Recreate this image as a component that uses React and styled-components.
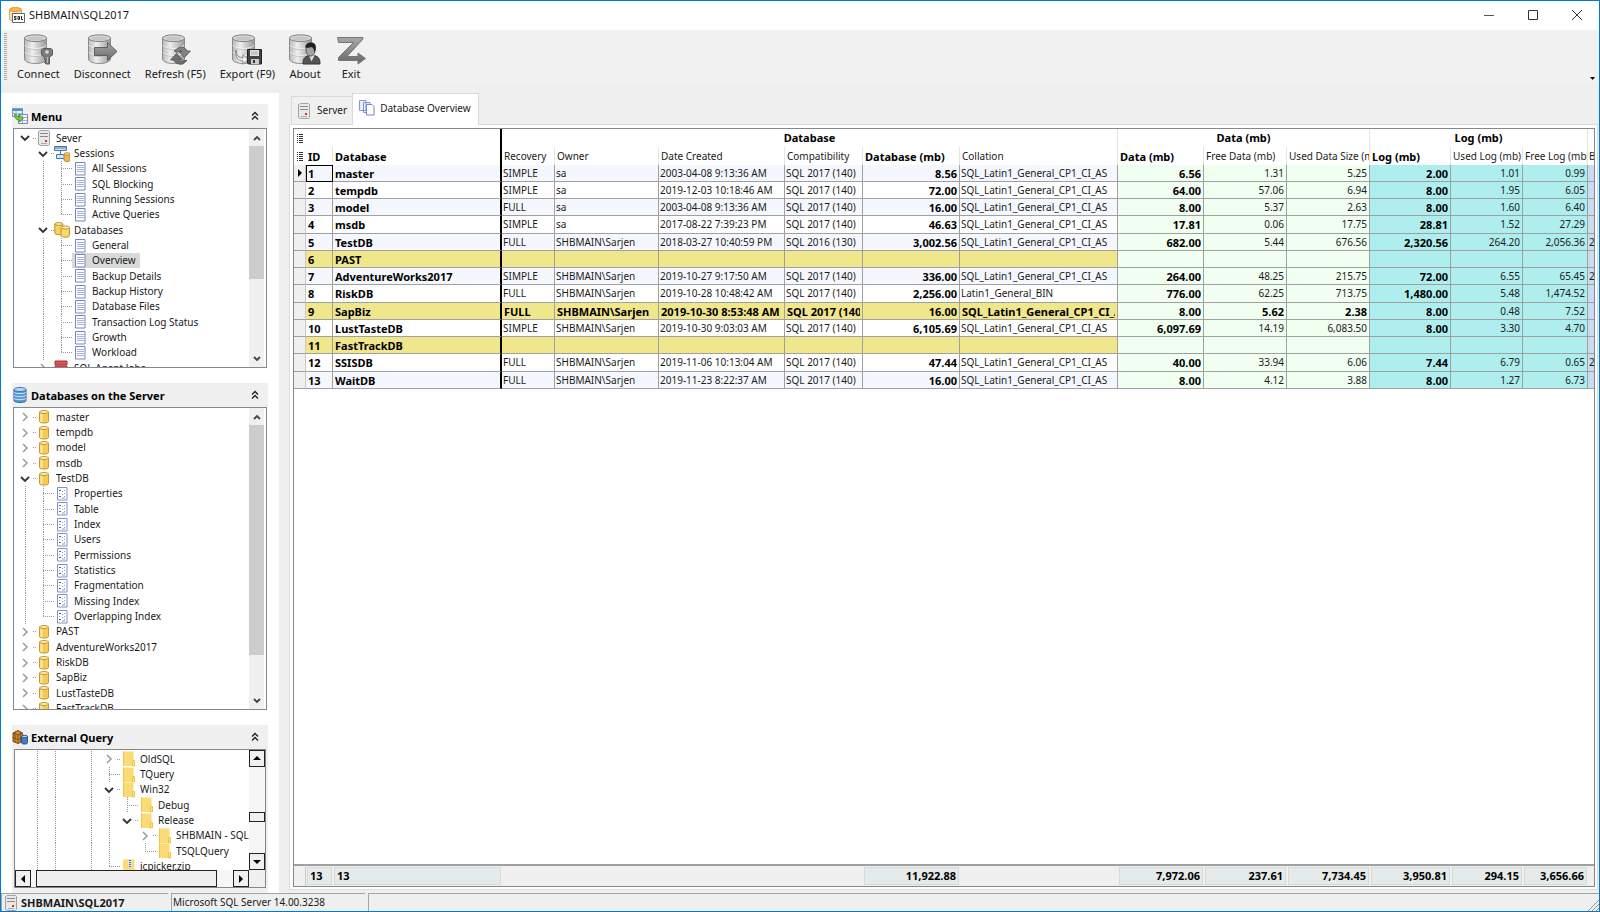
import React from 'react';
import styled, { createGlobalStyle, css } from 'styled-components';

const menuTree = [
  { guides: '', state: 'open', icon: 'server', label: 'Sever' },
  { guides: '0', state: 'open', icon: 'sessions', label: 'Sessions' },
  { guides: '01', state: 'leaf', icon: 'page', label: 'All Sessions' },
  { guides: '01', state: 'leaf', icon: 'page', label: 'SQL Blocking' },
  { guides: '01', state: 'leaf', icon: 'page', label: 'Running Sessions' },
  { guides: '01', state: 'last', icon: 'page', label: 'Active Queries' },
  { guides: '0', state: 'open', icon: 'databases', label: 'Databases' },
  { guides: '01', state: 'leaf', icon: 'page', label: 'General' },
  { guides: '01', state: 'leaf', icon: 'page', label: 'Overview', selected: true },
  { guides: '01', state: 'leaf', icon: 'page', label: 'Backup Details' },
  { guides: '01', state: 'leaf', icon: 'page', label: 'Backup History' },
  { guides: '01', state: 'leaf', icon: 'page', label: 'Database Files' },
  { guides: '01', state: 'leaf', icon: 'page', label: 'Transaction Log Status' },
  { guides: '01', state: 'leaf', icon: 'page', label: 'Growth' },
  { guides: '01', state: 'last', icon: 'page', label: 'Workload' },
  { guides: '0', state: 'closed', icon: 'job', label: 'SQL Agent Jobs' },
];

const databaseTree = [
  { guides: '', state: 'closed', icon: 'db', label: 'master' },
  { guides: '', state: 'closed', icon: 'db', label: 'tempdb' },
  { guides: '', state: 'closed', icon: 'db', label: 'model' },
  { guides: '', state: 'closed', icon: 'db', label: 'msdb' },
  { guides: '', state: 'open', icon: 'db', label: 'TestDB' },
  { guides: '1', state: 'leaf', icon: 'sheet', label: 'Properties' },
  { guides: '1', state: 'leaf', icon: 'sheet', label: 'Table' },
  { guides: '1', state: 'leaf', icon: 'sheet', label: 'Index' },
  { guides: '1', state: 'leaf', icon: 'sheet', label: 'Users' },
  { guides: '1', state: 'leaf', icon: 'sheet', label: 'Permissions' },
  { guides: '1', state: 'leaf', icon: 'sheet', label: 'Statistics' },
  { guides: '1', state: 'leaf', icon: 'sheet', label: 'Fragmentation' },
  { guides: '1', state: 'leaf', icon: 'sheet', label: 'Missing Index' },
  { guides: '1', state: 'last', icon: 'sheet', label: 'Overlapping Index' },
  { guides: '', state: 'closed', icon: 'db', label: 'PAST' },
  { guides: '', state: 'closed', icon: 'db', label: 'AdventureWorks2017' },
  { guides: '', state: 'closed', icon: 'db', label: 'RiskDB' },
  { guides: '', state: 'closed', icon: 'db', label: 'SapBiz' },
  { guides: '', state: 'closed', icon: 'db', label: 'LustTasteDB' },
  { guides: '', state: 'closed', icon: 'db', label: 'FastTrackDB' },
];

const queryTree = [
  { guides: '1101', state: 'closed', icon: 'folder', label: 'OldSQL' },
  { guides: '1101', state: 'leaf', icon: 'folder', label: 'TQuery' },
  { guides: '1101', state: 'open', icon: 'folder', label: 'Win32' },
  { guides: '11011', state: 'leaf', icon: 'folder', label: 'Debug' },
  { guides: '11011', state: 'open', icon: 'folder', label: 'Release' },
  { guides: '110110', state: 'closed', icon: 'folder', label: 'SHBMAIN - SQL2017' },
  { guides: '110110', state: 'last', icon: 'folder', label: 'TSQLQuery' },
  { guides: '1101', state: 'last', icon: 'zip', label: 'jcpicker.zip' },
];

const columns = [
  { title: 'ID', width: 27, bold: true },
  { title: 'Database', width: 169, bold: true, fixed: true },
  { title: 'Recovery', width: 53 },
  { title: 'Owner', width: 104 },
  { title: 'Date Created', width: 126 },
  { title: 'Compatibility', width: 78 },
  { title: 'Database (mb)', width: 97, bold: true, right: true },
  { title: 'Collation', width: 158 },
  { title: 'Data (mb)', width: 86, bold: true, right: true, tone: '#f0fff0' },
  { title: 'Free Data (mb)', width: 83, right: true, tone: '#f0fff0' },
  { title: 'Used Data Size (mb)', width: 83, right: true, tone: '#f0fff0' },
  { title: 'Log (mb)', width: 81, bold: true, right: true, tone: '#afeeee' },
  { title: 'Used Log (mb)', width: 72, right: true, tone: '#afeeee' },
  { title: 'Free Log (mb)', width: 65, right: true, tone: '#afeeee' },
  { title: 'B', tone: '#ccdcf0' },
];

const latin = 'SQL_Latin1_General_CP1_CI_AS';
const sarjen = 'SHBMAIN\\Sarjen';
const rows = [
  ['1', 'master', 'SIMPLE', 'sa', '2003-04-08 9:13:36 AM', 'SQL 2017 (140)', '8.56', latin, '6.56', '1.31', '5.25', '2.00', '1.01', '0.99', ''],
  ['2', 'tempdb', 'SIMPLE', 'sa', '2019-12-03 10:18:46 AM', 'SQL 2017 (140)', '72.00', latin, '64.00', '57.06', '6.94', '8.00', '1.95', '6.05', ''],
  ['3', 'model', 'FULL', 'sa', '2003-04-08 9:13:36 AM', 'SQL 2017 (140)', '16.00', latin, '8.00', '5.37', '2.63', '8.00', '1.60', '6.40', ''],
  ['4', 'msdb', 'SIMPLE', 'sa', '2017-08-22 7:39:23 PM', 'SQL 2017 (140)', '46.63', latin, '17.81', '0.06', '17.75', '28.81', '1.52', '27.29', ''],
  ['5', 'TestDB', 'FULL', sarjen, '2018-03-27 10:40:59 PM', 'SQL 2016 (130)', '3,002.56', latin, '682.00', '5.44', '676.56', '2,320.56', '264.20', '2,056.36', '2'],
  ['6', 'PAST', '', '', '', '', '', '', '', '', '', '', '', '', ''],
  ['7', 'AdventureWorks2017', 'SIMPLE', sarjen, '2019-10-27 9:17:50 AM', 'SQL 2017 (140)', '336.00', latin, '264.00', '48.25', '215.75', '72.00', '6.55', '65.45', '2'],
  ['8', 'RiskDB', 'FULL', sarjen, '2019-10-28 10:48:42 AM', 'SQL 2017 (140)', '2,256.00', 'Latin1_General_BIN', '776.00', '62.25', '713.75', '1,480.00', '5.48', '1,474.52', ''],
  ['9', 'SapBiz', 'FULL', sarjen, '2019-10-30 8:53:48 AM', 'SQL 2017 (140)', '16.00', latin, '8.00', '5.62', '2.38', '8.00', '0.48', '7.52', ''],
  ['10', 'LustTasteDB', 'SIMPLE', sarjen, '2019-10-30 9:03:03 AM', 'SQL 2017 (140)', '6,105.69', latin, '6,097.69', '14.19', '6,083.50', '8.00', '3.30', '4.70', ''],
  ['11', 'FastTrackDB', '', '', '', '', '', '', '', '', '', '', '', '', ''],
  ['12', 'SSISDB', 'FULL', sarjen, '2019-11-06 10:13:04 AM', 'SQL 2017 (140)', '47.44', latin, '40.00', '33.94', '6.06', '7.44', '6.79', '0.65', '2'],
  ['13', 'WaitDB', 'FULL', sarjen, '2019-11-23 8:22:37 AM', 'SQL 2017 (140)', '16.00', latin, '8.00', '4.12', '3.88', '8.00', '1.27', '6.73', ''],
];
const totals = ['13', '13', '', '', '', '', '11,922.88', '', '7,972.06', '237.61', '7,734.45', '3,950.81', '294.15', '3,656.66', ''];
const warned = ['6', '9', '11'];

/* ---------- icons ---------- */

function Cylinder({ x = 2 }) {
  return (
    <g transform={`translate(${x} 1)`}>
      <path d="M.5 4v21c0 2.500 5 4.500 11 4.500s11-2 11-4.500V4z" fill="url(#steel)" stroke="#8a8a8a" />
      <path d="M1 11c1 2 5 3.500 10.500 3.500S21 13 22 11M1 18c1 2 5 3.500 10.500 3.500S21 20 22 18" fill="none" stroke="#f4f4f4" strokeWidth="1" />
      <path d="M1 12c1 2 5 3.500 10.500 3.500S21 14 22 12M1 19c1 2 5 3.500 10.500 3.500S21 21 22 19" fill="none" stroke="#b0b0b0" strokeWidth=".6" />
      <ellipse cx="11.500" cy="4.200" rx="11" ry="3.400" fill="#d9d9d9" stroke="#808080" />
      <ellipse cx="11.500" cy="4.500" rx="8.500" ry="2" fill="#c6c6c6" />
    </g>
  );
}

const toolIcons = {
  connect: (
    <>
      <Cylinder x={2} />
      <path d="M21 15.500h8l1.500 1.500v5l-3 2v7h-3.500l-1.500-1.500 1.500-1.500-1.500-1.500v-2.500l-3-2v-5z" fill="#7c7c7c" stroke="#5a5a5a" />
      <circle cx="25" cy="19" r="1.800" fill="#ddd" />
      <path d="M25.500 24v6" stroke="#bbb" />
    </>
  ),
  disconnect: (
    <>
      <Cylinder x={2} />
      <path d="M8.500 14.500h13v-5l9.500 9-9.500 9v-5h-13z" fill="url(#dark)" stroke="#5f5f5f" />
    </>
  ),
  refresh: (
    <>
      <Cylinder x={3} />
      <path d="M15 18l5-3.500c4-1 7 .5 8 3.500h3.500l-6 6.500-5.500-6h3c-1-1.500-3.500-1-4.500 1z" fill="#808080" stroke="#555" strokeWidth=".8" />
      <path d="M28 27.500l-4 3.500c-4 .8-8-.5-9-4h-3.500l6-6.500 5.500 6h-3.500c1 2 4 2.500 5.500 1z" fill="#707070" stroke="#4c4c4c" strokeWidth=".8" />
    </>
  ),
  exporting: (
    <>
      <Cylinder x={1} />
      <path d="M5 17c0 6 3 8 7 8v-3.500l5 5-5 5V28c-5 0-8-4-7-11z" fill="#eee" stroke="#777" strokeWidth=".8" />
      <path d="M16.500 16.500h14v14.500h-13l-1-1z" fill="#444" stroke="#222" />
      <path d="M19 17h9v6h-9z" fill="#e4e4e4" />
      <path d="M20 19h7M20 21h7" stroke="#999" strokeWidth=".8" />
      <path d="M20 26h8v5h-8z" fill="#ccc" />
      <path d="M22 27h2v3h-2z" fill="#333" />
    </>
  ),
  about: (
    <>
      <Cylinder x={0} />
      <path d="M14 31c0-5 1-7 6-8.500l2.500 2 3-2c4.500 1.500 5.500 3.500 5.500 8.500z" fill="#555" stroke="#333" />
      <path d="M20 22.500l2.500 6 3-6z" fill="#ddd" />
      <ellipse cx="21.500" cy="17.500" rx="4.500" ry="5.500" fill="#a5a5a5" stroke="#555" />
      <path d="M16.500 15c-.5-3.500 2-5.500 5.500-5.500s6 2.500 4.500 8l-1.500 2c.5-3-1-5-2.500-5.500-2 .8-4 .8-6 1z" fill="#222" />
    </>
  ),
  exit: <path d="M2.500 4.500h25.500v1.500L12 23.500h11v-3.500l7.500 5.500-7.500 5.500v-3.500H3.500v-3L18.500 9.500H3.500z" fill="url(#dark)" stroke="#777" />,
};

const smallIcons = {
  server: (
    <>
      <path d="M2.500 1.500l2-1h8l1 1v13l-1 1h-8l-2-1z" fill="#e9e9e9" stroke="#a2a2a2" />
      <path d="M4 3.500h8M4 6.500h8" stroke="#8a8a8a" />
      <path d="M9 10h2v2H9z" fill="#e03020" />
      <path d="M5 13.500h6" stroke="#aaa" />
    </>
  ),
  sessions: (
    <>
      <path d="M.5.500h12v4H.5zM2.500 8.500h9v4h-9z" fill="#cde6fa" stroke="#4a76a8" />
      <path d="M6.500 5v4M1 2h11" stroke="#4a76a8" />
      <path d="M10 8v6c0 1 1.500 1.500 3 1.500s3-.5 3-1.500V8z" fill="#f0b850" stroke="#b77924" strokeWidth=".8" />
      <ellipse cx="13" cy="8" rx="3" ry="1.300" fill="#fbe09a" stroke="#b77924" strokeWidth=".8" />
    </>
  ),
  databases: (
    <>
      <path d="M.8 2v9c0 1 1.500 1.700 4 1.700s4-.7 4-1.700V2z" fill="#f7d267" stroke="#bd9024" />
      <ellipse cx="4.800" cy="2" rx="4" ry="1.400" fill="#fdeeb0" stroke="#bd9024" />
      <path d="M7 5.500v8c0 1 1.500 1.700 4.200 1.700s4.200-.7 4.200-1.700v-8z" fill="#f9d873" stroke="#bd9024" />
      <ellipse cx="11.200" cy="5.500" rx="4.200" ry="1.500" fill="#fdf0bd" stroke="#bd9024" />
    </>
  ),
  page: (
    <>
      <path d="M3.500 1.500h9.500v12.500H3.500z" fill="#fff" stroke="#7386bd" />
      <path d="M5 4.500h7M5 6.500h7M5 8.500h7M5 10.500h7" stroke="#a3b1dc" />
    </>
  ),
  sheet: (
    <>
      <path d="M3.500 1.500h9.500v12.500H3.500z" fill="#fff" stroke="#7e93cc" />
      <path d="M5 4.500h2M5 10.500h2" stroke="#4b5fae" />
      <path d="M8 5.500h1M10 4.500h1M10 7.500h1M8 8.500h1M10 10.500h1M8 12h3M5 7.500h1" stroke="#8b9bd0" />
    </>
  ),
  db: (
    <>
      <path d="M3.500 3v9.500c0 1 1.800 1.500 4.500 1.500s4.500-.5 4.500-1.500V3z" fill="#f3ca55" stroke="#c99733" />
      <path d="M5.500 5v8" stroke="#fbe9a6" strokeWidth="2" />
      <ellipse cx="8" cy="3" rx="4.500" ry="1.500" fill="#fdeeb5" stroke="#c99733" />
    </>
  ),
  job: <path d="M1 1h12v4H1zM1 6h12v8H1z" fill="#d9534f" stroke="#a33" />,
  folder: (
    <>
      <path d="M3 .5h10.500v9h1v5.500H3z" fill="#fbdb73" />
      <path d="M3.500.5V15M12.500 9.500h2V15h-2z" stroke="#efc44b" fill="#fde38c" />
    </>
  ),
  zip: (
    <>
      <path d="M3 .5h11.500V15H3z" fill="#fbdb73" />
      <path d="M8 0h4v9H8z" fill="#ddd" />
      <path d="M9 1.500h2M9 3.500h2M9 5.500h2M9 7.500h2" stroke="#777" />
    </>
  ),
  menu: (
    <>
      <path d="M.5.500h10v8H.5z" fill="#e6f1fb" stroke="#6f9cc9" />
      <path d="M0 1h11v2H0z" fill="#5b91c9" />
      <path d="M1 5.500h9M4 3v6" stroke="#9ab9dc" />
      <path d="M6.500 6.500h9v9h-9z" fill="#f4f7fd" stroke="#7388be" />
      <path d="M7 9.500h8M7 12.500h8M10.500 7v8" stroke="#9fb0d8" />
      <path d="M2.500 6.500h2c0 1.500 1 2.500 3 2.500V7l4 3.500-4 3.500v-2c-3.500 0-5-2-5-5.500z" fill="#7cc940" stroke="#3d8a15" strokeWidth=".8" />
    </>
  ),
  blueDb: (
    <>
      <path d="M2 2.500v11c0 1.200 2.500 2 6 2s6-.8 6-2v-11z" fill="#5b98d4" stroke="#2c64a0" />
      <path d="M2 5.500c2 1.500 10 1.500 12 0M2 8.500c2 1.500 10 1.500 12 0M2 11.500c2 1.500 10 1.500 12 0" fill="none" stroke="#cfe4f8" />
      <ellipse cx="8" cy="2.500" rx="6" ry="2" fill="#b6d8f5" stroke="#3c78b5" />
    </>
  ),
  query: (
    <>
      <path d="M1 4l5-2.500L10.500 4v8.500L6 14.500 1 12.500z" fill="#c8893a" stroke="#7c4a12" />
      <path d="M1 4l5 2 4.500-2M6 6v8M3 3v10M8.500 3v10M1 8.500l5 2 4.500-2" fill="none" stroke="#7c4a12" strokeWidth=".8" />
      <path d="M9.500 7.500v6c0 1 1 1.500 3 1.500s3-.5 3-1.500v-6z" fill="#3f7fc4" stroke="#24558c" />
      <ellipse cx="12.500" cy="7.500" rx="3" ry="1.200" fill="#a9d0f3" stroke="#24558c" />
    </>
  ),
  pages: (
    <>
      <path d="M.5.500h6.500v10H.5zM4.500 2.500H11v10H4.500z" fill="#e9f0fc" stroke="#8097cc" />
      <path d="M7.500 4.500H13l2 2v8.500H7.500z" fill="#fff" stroke="#7388c0" />
    </>
  ),
  app: (
    <>
      <path d="M.5 3v9c0 1.500 3 2 6 2s6-.5 6-2V3z" fill="#fbdfb0" stroke="#e2a550" />
      <ellipse cx="6.500" cy="2.500" rx="6" ry="2" fill="#f5b55c" stroke="#e2952c" />
      <path d="M3.500 6.500h12v9h-12z" fill="#fff" stroke="#666" />
      <path d="M7.500 9.500h-2v1.500h1.500v1.500H5M9 9.500h1.500v3H9zM12.500 9v3.500H14" fill="none" stroke="#222" />
    </>
  ),
};

function SmallIcon({ name }) {
  return <svg width="16" height="16" viewBox="0 0 16 16" aria-hidden="true">{smallIcons[name]}</svg>;
}

function Chevron({ open }) {
  return (
    <svg width="10" height="10" viewBox="0 0 10 10" fill="none" aria-hidden="true">
      {open
        ? <path d="M1 3l4 4 4-4" stroke="#333" strokeWidth="1.800" />
        : <path d="M3 1l4 4-4 4" stroke="#9a9a9a" strokeWidth="1.500" />}
    </svg>
  );
}

/* ---------- parts ---------- */

function Tree({ items, indent, label }) {
  return (
    <TreeList $indent={indent} aria-label={label}>
      {items.map((item) => (
        <TreeRow key={item.label}>
          {item.guides.split('').map((g, i) => <Guide key={i} $line={g === '1'} />)}
          {item.state === 'open' || item.state === 'closed' ? (
            <>
              <Expander type="button" aria-label={`Toggle ${item.label}`}>
                <Chevron open={item.state === 'open'} />
              </Expander>
              <Dash />
            </>
          ) : <Connector $last={item.state === 'last'} />}
          <TreeNode $selected={item.selected}>
            <SmallIcon name={item.icon} />
            {item.label}
          </TreeNode>
        </TreeRow>
      ))}
    </TreeList>
  );
}

function ScrollBar({ thumb }) {
  return (
    <ScrollColumn>
      <ScrollArrow type="button" aria-label="Scroll up">
        <svg width="10" height="10" viewBox="0 0 10 10" fill="none"><path d="M2 7l3-3 3 3" stroke="#444" strokeWidth="1.800" /></svg>
      </ScrollArrow>
      <ScrollTrack><ScrollThumb $size={thumb} /></ScrollTrack>
      <ScrollArrow type="button" aria-label="Scroll down">
        <svg width="10" height="10" viewBox="0 0 10 10" fill="none"><path d="M2 3l3 3 3-3" stroke="#444" strokeWidth="1.800" /></svg>
      </ScrollArrow>
    </ScrollColumn>
  );
}

function Group({ title, icon, share, filled, children }) {
  return (
    <GroupBox $share={share} $filled={filled}>
      <GroupHeader>
        <SmallIcon name={icon} />
        <GroupTitle>{title}</GroupTitle>
        <PlainButton type="button" aria-label={`Collapse ${title}`}>
          <svg width="10" height="12" viewBox="0 0 10 12" fill="none">
            <path d="M2 5.500l3-3 3 3M2 9.500l3-3 3 3" stroke="#222" strokeWidth="1.400" />
          </svg>
        </PlainButton>
      </GroupHeader>
      {children}
    </GroupBox>
  );
}

const arrows = {
  up: 'M2 7l4-4 4 4z',
  down: 'M2 4l4 4 4-4z',
  left: 'M8 2L4 6l4 4z',
  right: 'M4 2l4 4-4 4z',
};

function ClassicArrow({ dir }) {
  return (
    <ClassicButton type="button" aria-label={`Scroll ${dir}`}>
      <svg width="12" height="12" viewBox="0 0 12 12"><path d={arrows[dir]} fill="#000" /></svg>
    </ClassicButton>
  );
}

function Columns() {
  return (
    <colgroup>
      <Col $width={12} />
      {columns.map((c) => <Col key={c.title} $width={c.width} />)}
    </colgroup>
  );
}

function Grip() {
  return (
    <svg width="8" height="10" viewBox="0 0 8 10" aria-hidden="true">
      <path d="M1 1.500h1M1 3.500h1M1 5.500h1M1 7.500h1M1 9.500h1M3 1.500h4M3 3.500h4M3 5.500h4M3 7.500h4M3 9.500h4" stroke="#333" />
    </svg>
  );
}

function OverviewGrid() {
  return (
    <GridBox>
      <GridBody>
        <GridTable>
          <Columns />
          <thead>
            <tr>
              <BandCell><Grip /></BandCell>
              <BandCell colSpan={2} $fixed />
              <BandCell colSpan={6} $line>Database</BandCell>
              <BandCell colSpan={3} $line>Data (mb)</BandCell>
              <BandCell colSpan={3} $line>Log (mb)</BandCell>
              <BandCell />
            </tr>
            <tr>
              <HeadCell><Grip /></HeadCell>
              {columns.map((c) => (
                <HeadCell key={c.title} scope="col" $bold={c.bold} $fixed={c.fixed} $line>
                  <CellText>{c.title}</CellText>
                </HeadCell>
              ))}
            </tr>
          </thead>
          <tbody>
            {rows.map((row, r) => (
              <tr key={row[0]}>
                <IndicatorCell>
                  {r === 0 && <svg width="6" height="10" viewBox="0 0 6 10"><path d="M1 1l4 4-4 4z" fill="#000" /></svg>}
                </IndicatorCell>
                {row.map((value, i) => {
                  const warn = warned.includes(row[0]);
                  const col = columns[i];
                  const tone = col.tone || (warn ? '#f0e68c' : r % 2 ? '#fff' : '#f4f8fe');
                  return (
                    <Cell
                      key={col.title}
                      $bold={col.bold || (warn && i < 11)}
                      $right={col.right}
                      $fixed={col.fixed}
                      $tone={tone}
                      $focused={r === 0 && i === 0}
                    >
                      <CellText>{value}</CellText>
                    </Cell>
                  );
                })}
              </tr>
            ))}
          </tbody>
        </GridTable>
      </GridBody>
      <GridTable aria-label="Totals">
        <Columns />
        <tbody>
          <tr>
            <TotalCell $first />
            {totals.map((t, i) => (
              <TotalCell key={columns[i].title}>
                {t && <Total $right={columns[i].right}>{t}</Total>}
              </TotalCell>
            ))}
          </tr>
        </tbody>
      </GridTable>
    </GridBox>
  );
}

const tools = [
  ['connect', 'Connect'],
  ['disconnect', 'Disconnect'],
  ['refresh', 'Refresh (F5)'],
  ['exporting', 'Export (F9)'],
  ['about', 'About'],
  ['exit', 'Exit'],
];

function App() {
  return (
    <>
      <GlobalStyle />
      <Window>
        <TitleBar>
          <SmallIcon name="app" />
          <Title>SHBMAIN\SQL2017</Title>
          <WindowButton type="button" aria-label="Minimize">
            <svg width="10" height="10" viewBox="0 0 10 10"><path d="M0 5.500h10" stroke="#555" /></svg>
          </WindowButton>
          <WindowButton type="button" aria-label="Maximize">
            <svg width="10" height="10" viewBox="0 0 10 10"><path d="M.5.500h9v9h-9z" fill="none" stroke="#333" /></svg>
          </WindowButton>
          <WindowButton type="button" aria-label="Close">
            <svg width="10" height="10" viewBox="0 0 10 10"><path d="M0 0l10 10M10 0L0 10" stroke="#333" /></svg>
          </WindowButton>
        </TitleBar>
        <ToolBar>
          <svg width="0" height="0" aria-hidden="true">
            <defs>
              <linearGradient id="steel">
                <stop offset="0" stopColor="#b8b8b8" />
                <stop offset=".35" stopColor="#efefef" />
                <stop offset="1" stopColor="#9a9a9a" />
              </linearGradient>
              <linearGradient id="dark" x2="0" y2="1">
                <stop offset="0" stopColor="#a8a8a8" />
                <stop offset="1" stopColor="#686868" />
              </linearGradient>
            </defs>
          </svg>
          <ToolGrip />
          {tools.map(([name, label]) => (
            <ToolButton key={name} type="button">
              <svg width="32" height="32" viewBox="0 0 32 32" aria-hidden="true">{toolIcons[name]}</svg>
              {label}
            </ToolButton>
          ))}
          <ToolMore type="button" aria-label="More buttons">
            <svg width="5" height="3" viewBox="0 0 5 3"><path d="M0 0h5L2.500 3z" fill="#000" /></svg>
          </ToolMore>
        </ToolBar>
        <Workspace>
          <SideBar>
            <Group title="Menu" icon="menu" share={264}>
              <TreeBox>
                <Tree items={menuTree} indent={2} label="Menu" />
                <ScrollBar thumb={65} />
              </TreeBox>
            </Group>
            <Group title="Databases on the Server" icon="blueDb" share={327}>
              <TreeBox>
                <Tree items={databaseTree} indent={2} label="Databases on the Server" />
                <ScrollBar thumb={86} />
              </TreeBox>
            </Group>
            <Group title="External Query" icon="query" share={163} filled>
              <ClassicBox>
                <Tree items={queryTree} indent={13} label="External Query" />
                <ClassicScroll $vertical>
                  <ClassicArrow dir="up" />
                  <Hatch $grow={46} />
                  <ClassicThumb $grow={8} />
                  <Hatch $grow={32} />
                  <ClassicArrow dir="down" />
                </ClassicScroll>
                <ClassicScroll>
                  <ClassicArrow dir="left" />
                  <Hatch $grow={5} />
                  <ClassicThumb $grow={179} />
                  <Hatch $grow={16} />
                  <ClassicArrow dir="right" />
                </ClassicScroll>
              </ClassicBox>
            </Group>
          </SideBar>
          <Main>
            <TabStrip role="tablist">
              <Tab type="button" role="tab">
                <SmallIcon name="server" />
                Server
              </Tab>
              <Tab type="button" role="tab" aria-selected="true" $active>
                <SmallIcon name="pages" />
                Database Overview
              </Tab>
            </TabStrip>
            <TabPane>
              <OverviewGrid />
            </TabPane>
          </Main>
        </Workspace>
        <StatusBar>
          <StatusPanel $width={167} $bold>
            <SmallIcon name="server" />
            SHBMAIN\SQL2017
          </StatusPanel>
          <StatusPanel $width={194}>Microsoft SQL Server 14.00.3238</StatusPanel>
          <StatusPanel>
            <SizeGrip width="12" height="12" viewBox="0 0 12 12" aria-hidden="true">
              <path d="M1 12L12 1M5 12l7-7M9 12l3-3" stroke="#999" />
            </SizeGrip>
          </StatusPanel>
        </StatusBar>
      </Window>
    </>
  );
}

/* ---------- styles ---------- */

const GlobalStyle = createGlobalStyle`
  * {
    box-sizing: border-box;
  }
  body {
    margin: 0;
    font: 10px/15px "Noto Sans", "Open Sans", sans-serif;
    color: #1a1a1a;
    background: #f0f0f0;
  }
  button {
    font: inherit;
    color: inherit;
    border: 0;
    padding: 0;
    background: none;
  }
  svg {
    display: block;
    flex: none;
  }
`;

const Window = styled.div`
  display: flex;
  flex-direction: column;
  height: 100vh;
  border: 1px solid #0078d7;
  background: #efefef;
  overflow: hidden;
`;

const TitleBar = styled.header`
  display: flex;
  align-items: center;
  height: 29px;
  flex: none;
  padding: 0 0 2px 8px;
  background: #fff;
`;

const Title = styled.h1`
  flex: 1;
  margin: 0;
  padding-left: 4px;
  font-size: 11px;
  font-weight: 400;
`;

const WindowButton = styled.button`
  display: flex;
  align-items: center;
  justify-content: center;
  width: 44px;
  height: 26px;
`;

const ToolBar = styled.div`
  display: flex;
  height: 54px;
  flex: none;
  padding: 3px 0 0 3px;
  background: #f1f1f1;
  font-size: 11px;
`;

const ToolGrip = styled.div`
  width: 3px;
  height: 47px;
  margin-right: 3px;
  background: repeating-linear-gradient(#aaa 0 1px, transparent 1px 2px);
`;

const ToolButton = styled.button`
  display: flex;
  flex-direction: column;
  align-items: center;
  gap: 1px;
  padding: 0 7px;
`;

const ToolMore = styled.button`
  align-self: flex-end;
  margin-left: auto;
  padding: 4px;
`;

const Workspace = styled.div`
  display: flex;
  flex: 1;
  min-height: 0;
  padding-top: 9px;
`;

const SideBar = styled.aside`
  display: flex;
  flex-direction: column;
  gap: 15px;
  width: 278px;
  flex: none;
  padding: 11px 11px 0;
  background: #fff;
`;

const GroupBox = styled.section`
  display: flex;
  flex-direction: column;
  flex: ${(p) => p.$share} 1 0;
  min-height: 0;
  padding: ${(p) => (p.$filled ? '0 1px 5px' : '0 1px')};
  background: ${(p) => (p.$filled ? '#f0f0f0' : '#fff')};
`;

const GroupHeader = styled.div`
  display: flex;
  align-items: center;
  gap: 3px;
  height: 24px;
  flex: none;
  margin: 0 -1px;
  padding-right: 8px;
  background: #f0f0f0;
`;

const GroupTitle = styled.h2`
  flex: 1;
  margin: 0;
  font-size: 11px;
  font-weight: 700;
  color: #000;
`;

const PlainButton = styled.button`
  display: flex;
`;

const TreeBox = styled.div`
  display: flex;
  flex: 1;
  min-height: 0;
  border: 1px solid #828790;
  background: #fff;
`;

const TreeList = styled.ul`
  flex: 1;
  min-width: 0;
  min-height: 0;
  margin: 0;
  padding: 1px 0 0 ${(p) => p.$indent}px;
  list-style: none;
  overflow: hidden;
`;

const TreeRow = styled.li`
  display: flex;
  height: 15px;
  white-space: nowrap;

  &:nth-child(3n + 1) {
    height: 16px;
  }
`;

const dotsX = 'repeating-linear-gradient(90deg, #999 0 1px, transparent 1px 2px)';
const dotsY = 'repeating-linear-gradient(#999 0 1px, transparent 1px 2px)';

const Guide = styled.span`
  width: 9px;
  margin-left: 9px;
  flex: none;
  background: ${(p) => (p.$line ? `${dotsY} 0 0 / 1px 100% no-repeat` : 'none')};
`;

const Connector = styled.span`
  width: 11px;
  margin-left: 9px;
  flex: none;
  background:
    ${dotsX} 0 50% / 100% 1px no-repeat,
    ${dotsY} 0 0 / 1px ${(p) => (p.$last ? '50%' : '100%')} no-repeat;
`;

const Expander = styled.button`
  display: flex;
  align-items: center;
  justify-content: center;
  width: 16px;
  margin-left: 1px;
  flex: none;
`;

const Dash = styled.span`
  width: 3px;
  flex: none;
  background: ${dotsX} 0 50% / 100% 1px no-repeat;
`;

const TreeNode = styled.span`
  display: flex;
  align-items: center;
  gap: 4px;
  padding-right: 4px;
  background: ${(p) => (p.$selected ? '#d9d9d9' : 'none')};
`;

const ScrollColumn = styled.div`
  display: flex;
  flex-direction: column;
  width: 15px;
  margin-right: 2px;
  flex: none;
  background: #f0f0f0;
`;

const ScrollArrow = styled.button`
  display: flex;
  align-items: center;
  justify-content: center;
  height: 17px;
`;

const ScrollTrack = styled.div`
  flex: 1;
`;

const ScrollThumb = styled.div`
  height: ${(p) => p.$size}%;
  background: #cdcdcd;
`;

const ClassicBox = styled.div`
  display: grid;
  grid-template: minmax(0, 1fr) 17px / minmax(0, 1fr) 16px;
  flex: 1;
  min-height: 0;
  border: 1px solid #828790;
  margin: 0 1px;
  background: linear-gradient(#fff, #fff) 0 0 / 100% calc(100% - 17px) no-repeat #f0f0f0;
`;

const ClassicScroll = styled.div`
  display: flex;
  flex-direction: ${(p) => (p.$vertical ? 'column' : 'row')};
`;

const ClassicButton = styled.button`
  display: flex;
  align-items: center;
  justify-content: center;
  width: 16px;
  height: 17px;
  flex: none;
  border: 1px solid #222;
  background: #f0f0f0;
`;

const Hatch = styled.div`
  flex: ${(p) => p.$grow} 1 0;
  background: #f6f6f6;
`;

const ClassicThumb = styled.div`
  flex: ${(p) => p.$grow} 1 0;
  border: 1px solid #222;
  background: #f0f0f0;
`;

const Main = styled.main`
  display: flex;
  flex-direction: column;
  flex: 1;
  min-width: 0;
  padding: 0 1px 3px 10px;
`;

const TabStrip = styled.div`
  display: flex;
  align-items: flex-end;
  height: 31px;
  flex: none;
  padding-left: 2px;
`;

const Tab = styled.button`
  display: flex;
  align-items: center;
  gap: 5px;
  height: 28px;
  padding: 0 5px 0 4px;
  border: 1px solid #d9d9d9;
  border-bottom: 0;
  background: #f0f0f0;

  ${(p) => p.$active && css`
    height: 32px;
    padding: 0 7px 3px 6px;
    margin: 0 0 -1px -1px;
    background: #fff;
    z-index: 1;
  `}
`;

const TabPane = styled.section`
  display: flex;
  flex: 1;
  min-height: 0;
  padding: 3px 2px 2px 3px;
  border: 1px solid #dcdcdc;
  background: #fff;
`;

const GridBox = styled.div`
  display: flex;
  flex-direction: column;
  flex: 1;
  min-width: 0;
  border: 1px solid #828790;
`;

const GridBody = styled.div`
  flex: 1;
  min-height: 0;
  overflow: hidden;
`;

const GridTable = styled.table`
  width: 100%;
  table-layout: fixed;
  border-collapse: separate;
  border-spacing: 0;

  tbody tr:nth-child(4n) td {
    height: 18px;
  }
`;

const Col = styled.col`
  width: ${(p) => (p.$width ? `${p.$width}px` : 'auto')};
`;

const fixedEdge = css`
  border-right: 2px solid #000;
`;

const BandCell = styled.th`
  height: 18px;
  padding: 0;
  font-size: 11px;
  line-height: 18px;
  color: #000;
  ${(p) => p.$line && 'border-right: 1px solid #e5e5e5;'}
  ${(p) => p.$fixed && fixedEdge}

  svg {
    margin-left: 2px;
  }
`;

const HeadCell = styled.th`
  height: 18px;
  padding: 0 0 0 2px;
  text-align: left;
  line-height: 15px;
  font-size: ${(p) => (p.$bold ? 11 : 10)}px;
  font-weight: ${(p) => (p.$bold ? 700 : 400)};
  color: ${(p) => (p.$bold ? '#000' : '#1a1a1a')};
  ${(p) => p.$line && 'border-right: 1px solid #e5e5e5;'}
  ${(p) => p.$fixed && fixedEdge}

  &:last-child {
    padding-left: 1px;
    border-right: 0;
  }
`;

const CellText = styled.div`
  overflow: hidden;
  white-space: nowrap;
`;

const Cell = styled.td`
  height: 17px;
  padding: 0 2px 0 1px;
  line-height: 15px;
  text-align: ${(p) => (p.$right ? 'right' : 'left')};
  font-size: ${(p) => (p.$bold ? 11 : 10)}px;
  font-weight: ${(p) => (p.$bold ? 700 : 400)};
  color: ${(p) => (p.$bold ? '#000' : '#1a1a1a')};
  background: ${(p) => p.$tone};
  border-right: 1px solid #a0a0a0;
  border-bottom: 1px solid #a0a0a0;
  ${(p) => p.$bold && 'padding-left: 2px;'}
  ${(p) => p.$fixed && fixedEdge}
  ${(p) => p.$focused && 'outline: 1px solid #000; outline-offset: -1px;'}

  &:last-child {
    padding: 0 0 0 1px;
    border-right: 0;
  }
`;

const IndicatorCell = styled.td`
  height: 17px;
  padding: 0 0 0 3px;
  background: #f0f0f0;
  border-right: 1px solid #c8c8c8;
  border-bottom: 1px solid #a0a0a0;
`;

const TotalCell = styled.td`
  height: 22px;
  padding: 0 1px;
  background: #f0f0f0;
  border-top: 2px solid #a0a0a0;
  ${(p) => p.$first && 'border-right: 1px solid #c8c8c8;'}
`;

const Total = styled.div`
  height: 18px;
  padding: 0 2px;
  border: 1px solid #d6d9d9;
  background: #e5eaea;
  font-size: 11px;
  font-weight: 700;
  line-height: 16px;
  color: #000;
  text-align: ${(p) => (p.$right ? 'right' : 'left')};
`;

const StatusBar = styled.footer`
  display: flex;
  gap: 3px;
  height: 18px;
  flex: none;
`;

const StatusPanel = styled.div`
  display: flex;
  align-items: center;
  gap: 2px;
  flex: ${(p) => (p.$width ? `0 0 ${p.$width}px` : '1')};
  padding-left: 1px;
  border: 1px solid #a5a5a5;
  border-width: 1px 0 0 1px;
  font-size: ${(p) => (p.$bold ? 11 : 10)}px;
  font-weight: ${(p) => (p.$bold ? 700 : 400)};
`;

const SizeGrip = styled.svg`
  margin-left: auto;
  align-self: flex-end;
`;

export default App;
